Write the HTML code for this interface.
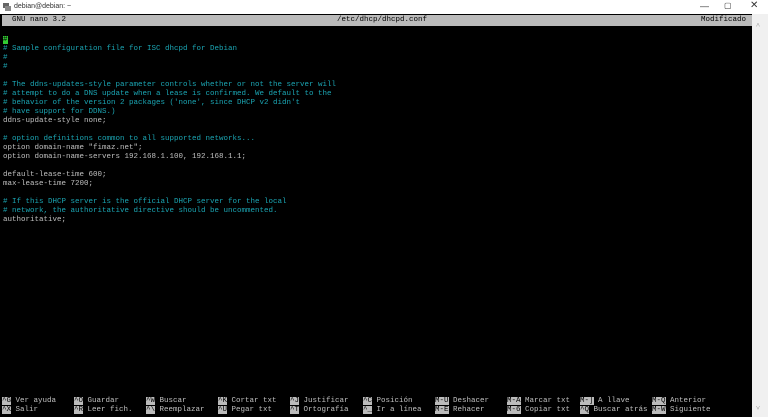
<!DOCTYPE html>
<html><head><style>
html,body{margin:0;padding:0;width:768px;height:417px;overflow:hidden;background:#000;}
#title{position:absolute;left:0;top:0;width:768px;height:14px;background:#fff;font:7px "Liberation Sans",sans-serif;color:#333;}
#title .t{position:absolute;left:14px;top:3px;}
#term{position:absolute;left:0;top:14px;width:752px;height:403px;background:#000;}
#sb{position:absolute;left:752px;top:14px;width:16px;height:403px;background:#f0f0f0;}
.ln{position:absolute;left:3px;white-space:pre;font:7.5px/9px "Liberation Mono",monospace;color:#c0c0c0;}
.c{color:#1ba6b4;}
#status{position:absolute;left:2px;top:15px;width:750px;height:11px;background:#bbb;}
.k{background:#bbb;color:#000;}
</style></head><body>
<div id="title"><svg style="position:absolute;left:2px;top:2px" width="10" height="10"><rect x="1" y="1" width="6" height="5" fill="#666"/><rect x="3" y="4" width="6" height="5" fill="#888"/></svg><span class="t">debian@debian: ~</span>
<span style="position:absolute;left:700px;top:1px;font-size:9px">—</span>
<span style="position:absolute;left:724px;top:1px;font-size:8px">▢</span>
<span style="position:absolute;left:750px;top:0px;font-size:10px">✕</span></div>
<div id="term"></div>
<div id="sb"><span style="position:absolute;left:4px;top:7px;font-size:7px;color:#777">˄</span><span style="position:absolute;left:4px;top:390px;font-size:7px;color:#777">˅</span></div>
<div id="status"></div>
<div class="ln" style="top:16px;color:#000">  GNU nano 3.2</div>
<div class="ln" style="top:16px;left:337px;color:#000">/etc/dhcp/dhcpd.conf</div>
<div class="ln" style="top:16px;left:701px;color:#000">Modificado</div>
<div class="ln c" style="top:36px"><span style="background:#3c3;color:#000">#</span></div>
<div class="ln c" style="top:45px"># Sample configuration file for ISC dhcpd for Debian</div>
<div class="ln c" style="top:54px">#</div>
<div class="ln c" style="top:63px">#</div>
<div class="ln c" style="top:81px"># The ddns-updates-style parameter controls whether or not the server will</div>
<div class="ln c" style="top:90px"># attempt to do a DNS update when a lease is confirmed. We default to the</div>
<div class="ln c" style="top:99px"># behavior of the version 2 packages ('none', since DHCP v2 didn't</div>
<div class="ln c" style="top:108px"># have support for DDNS.)</div>
<div class="ln" style="top:117px">ddns-update-style none;</div>
<div class="ln c" style="top:135px"># option definitions common to all supported networks...</div>
<div class="ln" style="top:144px">option domain-name "fimaz.net";</div>
<div class="ln" style="top:153px">option domain-name-servers 192.168.1.100, 192.168.1.1;</div>
<div class="ln" style="top:171px">default-lease-time 600;</div>
<div class="ln" style="top:180px">max-lease-time 7200;</div>
<div class="ln c" style="top:198px"># If this DHCP server is the official DHCP server for the local</div>
<div class="ln c" style="top:207px"># network, the authoritative directive should be uncommented.</div>
<div class="ln" style="top:216px">authoritative;</div>

<div class="ln" style="top:397px;left:2px"><span class="k">^G</span> Ver ayuda</div>
<div class="ln" style="top:406px;left:2px"><span class="k">^X</span> Salir</div>
<div class="ln" style="top:397px;left:74px"><span class="k">^O</span> Guardar</div>
<div class="ln" style="top:406px;left:74px"><span class="k">^R</span> Leer fich.</div>
<div class="ln" style="top:397px;left:146px"><span class="k">^W</span> Buscar</div>
<div class="ln" style="top:406px;left:146px"><span class="k">^\</span> Reemplazar</div>
<div class="ln" style="top:397px;left:218px"><span class="k">^K</span> Cortar txt</div>
<div class="ln" style="top:406px;left:218px"><span class="k">^U</span> Pegar txt</div>
<div class="ln" style="top:397px;left:290px"><span class="k">^J</span> Justificar</div>
<div class="ln" style="top:406px;left:290px"><span class="k">^T</span> Ortografía</div>
<div class="ln" style="top:397px;left:363px"><span class="k">^C</span> Posición</div>
<div class="ln" style="top:406px;left:363px"><span class="k">^_</span> Ir a línea</div>
<div class="ln" style="top:397px;left:435px"><span class="k">M-U</span> Deshacer</div>
<div class="ln" style="top:406px;left:435px"><span class="k">M-E</span> Rehacer</div>
<div class="ln" style="top:397px;left:507px"><span class="k">M-A</span> Marcar txt</div>
<div class="ln" style="top:406px;left:507px"><span class="k">M-6</span> Copiar txt</div>
<div class="ln" style="top:397px;left:580px"><span class="k">M-]</span> A llave</div>
<div class="ln" style="top:406px;left:580px"><span class="k">^Q</span> Buscar atrás</div>
<div class="ln" style="top:397px;left:652px"><span class="k">M-Q</span> Anterior</div>
<div class="ln" style="top:406px;left:652px"><span class="k">M-W</span> Siguiente</div>
</body></html>
